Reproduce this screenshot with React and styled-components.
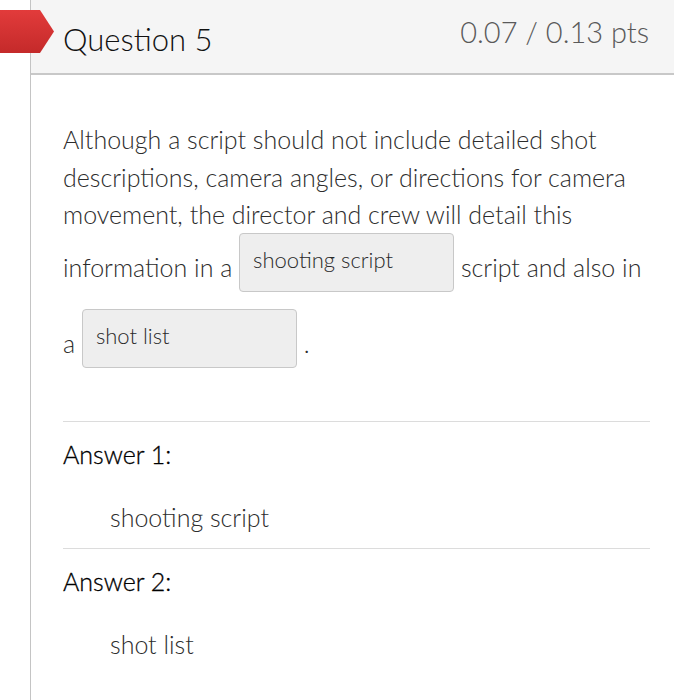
import React from "react";
import styled, { createGlobalStyle } from "styled-components";

const GlobalStyle = createGlobalStyle`
  html, body { margin: 0; padding: 0; background: #fff; }
  body { font-family: Lato, "Noto Sans", "Liberation Sans", sans-serif; }
`;

const Card = styled.div`
  position: relative;
  margin-left: 30px;
  min-height: 700px;
  border-left: 1px solid #c4c4c4;
  box-sizing: border-box;
`;

const Flag = styled.svg`
  position: absolute;
  left: -31px;
  top: 10px;
  width: 54px;
  height: 43px;
`;

const Header = styled.div`
  height: 73px;
  box-sizing: content-box;
  background: #f5f5f5;
  border-bottom: 2px solid #c8c8c8;
  display: flex;
  justify-content: space-between;
  align-items: flex-start;
  padding: 0 25px 0 32px;
`;

const Title = styled.div`
  font-size: 31px;
  line-height: 36px;
  font-weight: 300;
  padding-top: 21px;
  color: #111;
`;

const Points = styled.div`
  font-size: 29px;
  line-height: 34px;
  font-weight: 300;
  padding-top: 15px;
  color: #5a5a5a;
`;

const Body = styled.div`
  padding: 46px 24px 0 32px;
`;

const Question = styled.div`
  font-size: 25px;
  line-height: 37.5px;
  font-weight: 300;
  color: #2d2d2d;
  padding-bottom: 35px;
`;

const Blank = styled.span`
  display: inline-block;
  box-sizing: border-box;
  width: 215px;
  height: 59px;
  margin: -1px 0 18px;
  vertical-align: -33px;
  overflow: hidden;
  background: #eeeeee;
  border: 1px solid #c8c8c8;
  border-radius: 4px;
  padding: 13px 12px 0 13px;
  font-size: 22px;
  line-height: 26px;
  font-weight: 300;
  color: #2a2a2a;
`;

const AnswerBlock = styled.div`
  border-top: 1px solid #dcdcdc;
  padding: 15px 0 14px;
`;

const AnswerLabel = styled.div`
  font-size: 25px;
  line-height: 34px;
  font-weight: 300;
  color: #000;
  -webkit-text-stroke: 0.3px #000;
`;

const AnswerValue = styled.div`
  margin-top: 29px;
  padding-left: 47px;
  font-size: 25px;
  line-height: 34px;
  font-weight: 300;
  color: #2d2d2d;
`;

const answers = [
  { label: "Answer 1:", value: "shooting script" },
  { label: "Answer 2:", value: "shot list" },
];

export default function App() {
  return (
    <>
      <GlobalStyle />
      <Card>
        <Flag viewBox="0 0 54 43">
          <defs>
            <linearGradient id="flagGrad" x1="0" y1="0" x2="0" y2="1">
              <stop offset="0" stopColor="#e23b3b" />
              <stop offset="1" stopColor="#c42a2a" />
            </linearGradient>
          </defs>
          <polygon points="0,0 40,0 54,21.5 40,43 0,43" fill="url(#flagGrad)" />
        </Flag>
        <Header>
          <Title>Question 5</Title>
          <Points>0.07 / 0.13 pts</Points>
        </Header>
        <Body>
          <Question>
            Although a script should not include detailed shot descriptions,
            camera angles, or directions for camera movement, the director and
            crew will detail this information in a{" "}
            <Blank>shooting script</Blank> script and also in a{" "}
            <Blank>shot list</Blank> .
          </Question>
          {answers.map((a) => (
            <AnswerBlock key={a.label}>
              <AnswerLabel>{a.label}</AnswerLabel>
              <AnswerValue>{a.value}</AnswerValue>
            </AnswerBlock>
          ))}
        </Body>
      </Card>
    </>
  );
}
